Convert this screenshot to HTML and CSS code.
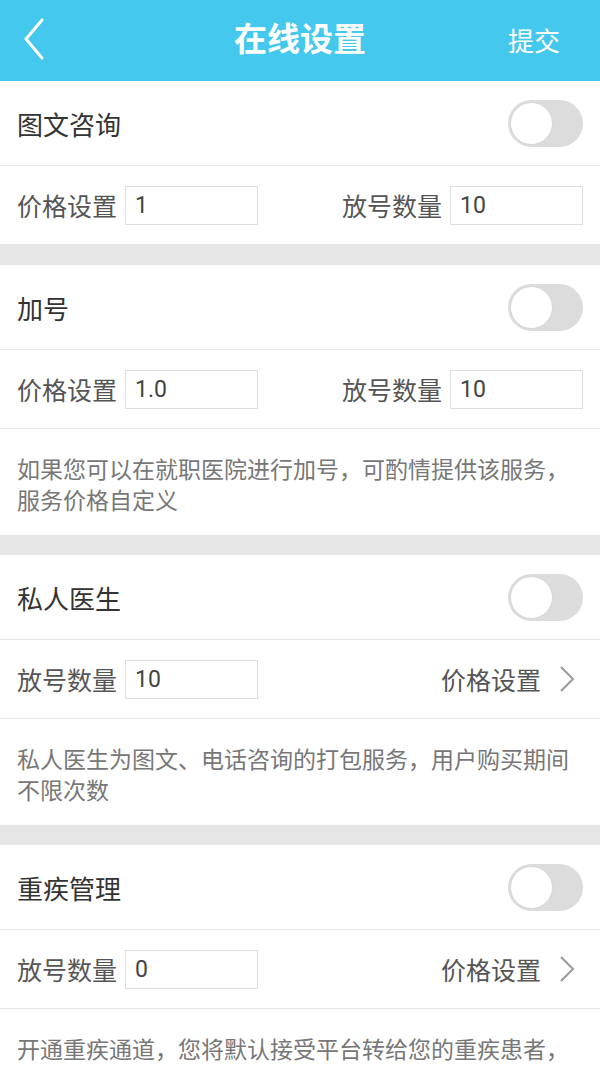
FILE: index.html
```html
<!DOCTYPE html>
<html lang="zh">
<head>
<meta charset="utf-8">
<link rel="stylesheet" href="styles.css">
</head>
<body>
<header class="bar">
  <svg class="back" width="24" height="44" viewBox="0 0 24 44"><path d="M20 3 L4 22 L20 41" fill="none" stroke="#fff" stroke-width="3" stroke-linecap="round" stroke-linejoin="round"/></svg>
  <div class="title">在线设置</div>
  <div class="submit">提交</div>
</header>

<section class="card">
  <div class="row head"><span class="name">图文咨询</span><span class="toggle"><span class="knob"></span></span></div>
  <div class="row fields">
    <div class="field"><span class="label">价格设置</span><span class="input">1</span></div>
    <div class="field"><span class="label">放号数量</span><span class="input">10</span></div>
  </div>
</section>
<div class="gap"></div>

<section class="card">
  <div class="row head"><span class="name">加号</span><span class="toggle"><span class="knob"></span></span></div>
  <div class="row fields">
    <div class="field"><span class="label">价格设置</span><span class="input">1.0</span></div>
    <div class="field"><span class="label">放号数量</span><span class="input">10</span></div>
  </div>
  <div class="note">如果您可以在就职医院进行加号，可酌情提供该服务，服务价格自定义</div>
</section>
<div class="gap"></div>

<section class="card">
  <div class="row head"><span class="name">私人医生</span><span class="toggle"><span class="knob"></span></span></div>
  <div class="row fields">
    <div class="field"><span class="label">放号数量</span><span class="input">10</span></div>
    <div class="link"><span class="label">价格设置</span><svg class="chev" width="18" height="28" viewBox="0 0 18 28"><path d="M3 2 L15 14 L3 26" fill="none" stroke="#999" stroke-width="2"/></svg></div>
  </div>
  <div class="note">私人医生为图文、电话咨询的打包服务，用户购买期间不限次数</div>
</section>
<div class="gap"></div>

<section class="card">
  <div class="row head"><span class="name">重疾管理</span><span class="toggle"><span class="knob"></span></span></div>
  <div class="row fields">
    <div class="field"><span class="label">放号数量</span><span class="input">0</span></div>
    <div class="link"><span class="label">价格设置</span><svg class="chev" width="18" height="28" viewBox="0 0 18 28"><path d="M3 2 L15 14 L3 26" fill="none" stroke="#999" stroke-width="2"/></svg></div>
  </div>
  <div class="note">开通重疾通道，您将默认接受平台转给您的重疾患者，您的接诊将由平台统一安排，请您在方便时及时处理患者的咨询</div>
</section>
</body>
</html>
```

FILE: styles.css
```css
html, body {
  margin: 0;
  padding: 0;
  background: #fff;
  font-family: "Noto Sans CJK SC", "Noto Sans", sans-serif;
  width: 600px;
  overflow: hidden;
}
.bar {
  height: 81px;
  background: #45c8ee;
  display: flex;
  align-items: center;
  position: relative;
  color: #fff;
}
.back {
  margin-left: 22px;
  margin-top: -4px;
}
.title {
  position: absolute;
  left: 0;
  right: 0;
  top: -3px;
  text-align: center;
  font-size: 33px;
  font-weight: bold;
  line-height: 81px;
}
.submit {
  margin-left: auto;
  margin-right: 40px;
  margin-top: -2px;
  font-size: 26px;
}
.card {
  background: #fff;
}
.row {
  display: flex;
  align-items: center;
  justify-content: space-between;
  padding: 0 17px;
  border-bottom: 1px solid #e6e6e6;
}
.head {
  height: 84px;
}
.fields {
  height: 78px;
}
.name {
  font-size: 26px;
  color: #333;
}
.toggle {
  width: 75px;
  height: 47px;
  border-radius: 24px;
  background: #dcdcdc;
  display: flex;
  align-items: center;
  padding-left: 2px;
  box-sizing: border-box;
}
.knob {
  width: 43px;
  height: 43px;
  border-radius: 50%;
  background: #fff;
  box-sizing: border-box;
  border: 1px solid #d6d6d6;
}
.field {
  display: flex;
  align-items: center;
  gap: 8px;
}
.label {
  font-size: 25px;
  color: #555;
}
.input {
  width: 133px;
  height: 39px;
  box-sizing: border-box;
  border: 1px solid #dddddd;
  font-family: "Roboto", "Liberation Sans", sans-serif;
  font-size: 23px;
  color: #444;
  padding-left: 9px;
  display: flex;
  align-items: center;
}
.link {
  display: flex;
  align-items: center;
  gap: 17px;
  padding-right: 7px;
}
.note {
  padding: 24px 17px 20px;
  font-size: 23px;
  line-height: 31px;
  color: #777;
  height: 62px;
  overflow: hidden;
}
.gap {
  height: 20px;
  background: #e6e6e6;
}
```
